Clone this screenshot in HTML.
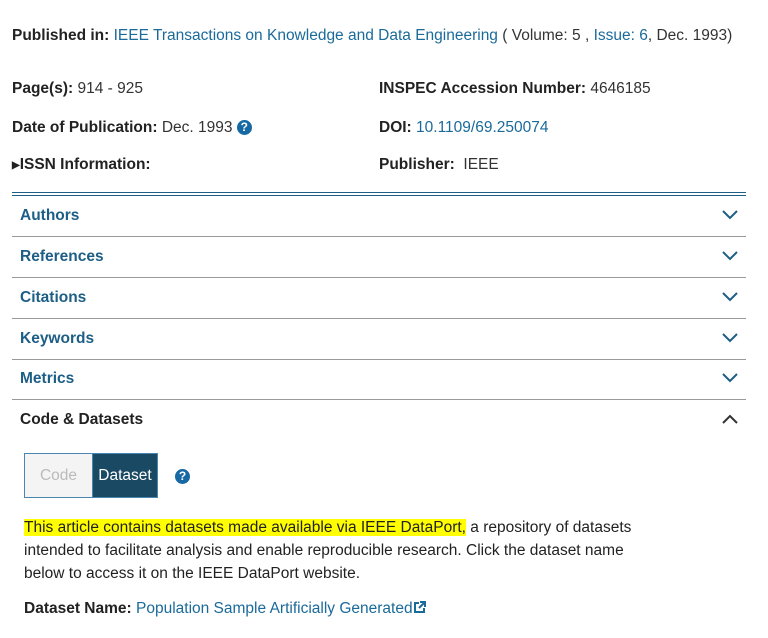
<!DOCTYPE html><html><head><style>
body{margin:0;background:#fff;font-family:"Liberation Sans",Arial,sans-serif;font-size:15.5px;color:#333;}
.a{color:#1a6a9a;}
.t{position:absolute;white-space:nowrap;}
b{color:#222;}
.row{position:absolute;left:12px;width:734px;height:40px;border-bottom:1px solid #999;}
.row span{position:absolute;left:8px;top:11px;font-weight:bold;color:#1d5e86;font-size:15.5px;}
.row svg{position:absolute;right:8px;top:14px;}
.q{display:inline-block;width:15px;height:15px;border-radius:50%;background:#1669a3;color:#fff;font-size:12px;font-weight:bold;text-align:center;line-height:15px;vertical-align:1px;}
</style></head><body>
<div class="t" style="left:12px;top:27px"><b>Published in:</b> <span class="a">IEEE Transactions on Knowledge and Data Engineering</span> ( Volume: 5 , <span class="a">Issue: 6</span>, Dec. 1993)</div>
<div class="t" style="left:12px;top:80px"><b>Page(s):</b> 914 - 925</div>
<div class="t" style="left:379px;top:80px"><b>INSPEC Accession Number:</b> 4646185</div>
<div class="t" style="left:12px;top:119px"><b>Date of Publication:</b> Dec. 1993 <span class="q">?</span></div>
<div class="t" style="left:379px;top:119px"><b>DOI:</b> <span class="a">10.1109/69.250074</span></div>
<div class="t" style="left:12px;top:156px"><b><span style="font-size:10px;vertical-align:1px">&#9654;</span>ISSN Information:</b></div>
<div class="t" style="left:379px;top:156px"><b>Publisher:</b>&nbsp; IEEE</div>
<div style="position:absolute;left:12px;top:192px;width:734px;height:1px;background:#1d5e86"></div>
<div style="position:absolute;left:12px;top:195px;width:734px;height:1px;background:#1d5e86"></div>
<div class="row" style="top:196px"><span>Authors</span><svg width="16" height="10"><path d="M1 1L8 8L15 1" stroke="#1d5e86" stroke-width="2" fill="none"/></svg></div>
<div class="row" style="top:237px"><span>References</span><svg width="16" height="10"><path d="M1 1L8 8L15 1" stroke="#1d5e86" stroke-width="2" fill="none"/></svg></div>
<div class="row" style="top:278px"><span>Citations</span><svg width="16" height="10"><path d="M1 1L8 8L15 1" stroke="#1d5e86" stroke-width="2" fill="none"/></svg></div>
<div class="row" style="top:319px"><span>Keywords</span><svg width="16" height="10"><path d="M1 1L8 8L15 1" stroke="#1d5e86" stroke-width="2" fill="none"/></svg></div>
<div class="row" style="top:359px"><span>Metrics</span><svg width="16" height="10"><path d="M1 1L8 8L15 1" stroke="#1d5e86" stroke-width="2" fill="none"/></svg></div>
<div class="row" style="top:400px;border:none"><span style="color:#222">Code &amp; Datasets</span><svg width="16" height="10"><path d="M1 9L8 2L15 9" stroke="#333" stroke-width="2" fill="none"/></svg></div>
<div style="position:absolute;left:24px;top:453px;width:134px;height:45px;border:1px solid #4a86b0;box-sizing:border-box;display:flex">
<div style="width:67px;background:#f4f4f4;color:#bbb;text-align:center;line-height:43px;border-right:1px solid #4a86b0">Code</div>
<div style="flex:1;background:#1a4a63;color:#fff;text-align:center;line-height:43px">Dataset</div></div>
<div class="t" style="left:175px;top:468px"><span class="q">?</span></div>
<div class="t" style="left:24px;top:516px;line-height:23px;color:#222"><span style="background:#ffff00">This article contains datasets made available via IEEE DataPort,</span> a repository of datasets<br>intended to facilitate analysis and enable reproducible research. Click the dataset name<br>below to access it on the IEEE DataPort website.</div>
<div class="t" style="left:24px;top:600px"><b>Dataset Name:</b> <span class="a">Population Sample Artificially Generated</span><svg width="13" height="13" style="vertical-align:-1px"><path d="M6 2H2V11H11V7" stroke="#1a6a9a" stroke-width="2" fill="none"/><path d="M7 1H12V6M12 1L6 7" stroke="#1a6a9a" stroke-width="2" fill="none"/></svg></div>
</body></html>
